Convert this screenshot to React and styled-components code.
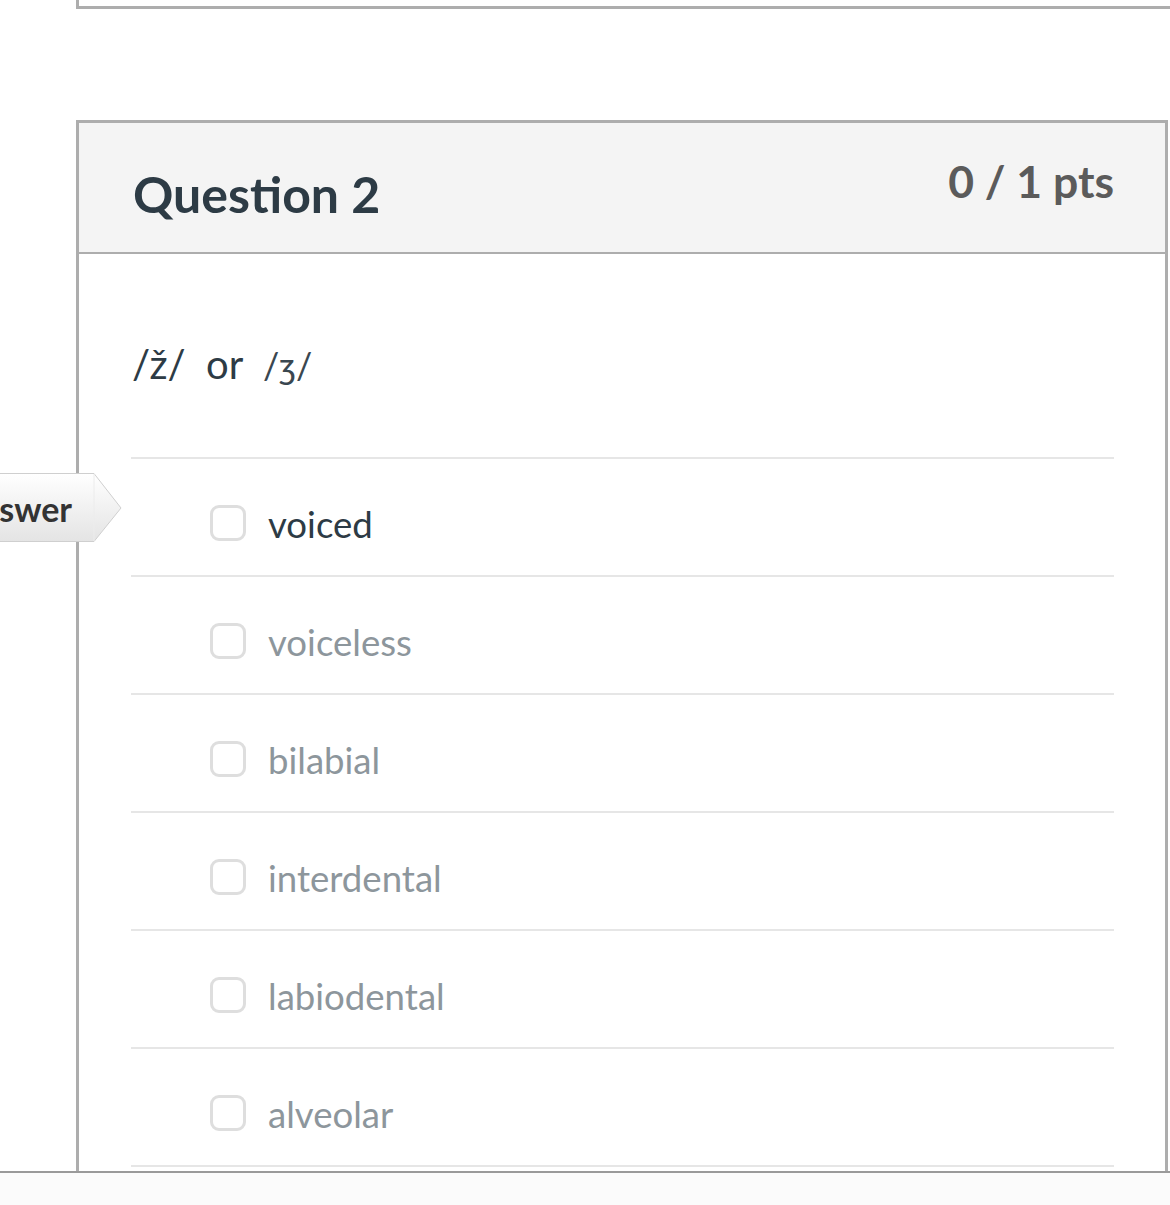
import React from "react";
import styled, { createGlobalStyle } from "styled-components";

const Global = createGlobalStyle`
  html, body { margin: 0; padding: 0; background: #fff; }
  body { overflow: hidden; font-family: Lato, "Open Sans", sans-serif; }
`;

const Page = styled.div`
  padding-left: 76px;
  height: 1205px;
  box-sizing: border-box;
`;

const PrevBox = styled.div`
  height: 6px;
  border-left: 3px solid #adadad;
  border-bottom: 3px solid #adadad;
  margin-right: -10px;
`;

const Card = styled.section`
  margin-top: 111px;
  width: 1092px;
  box-sizing: border-box;
  border: 3px solid #adadad;
  border-bottom: none;
  height: 1100px;
`;

const Header = styled.header`
  height: 129px;
  background: #f4f4f4;
  border-bottom: 2px solid #adadad;
  display: flex;
  justify-content: space-between;
  align-items: flex-start;
  padding: 0 51px 0 54px;
`;

const Title = styled.h2`
  margin: 46px 0 0;
  font-size: 50px;
  line-height: 1;
  font-weight: 700;
  color: #2d3b45;
`;

const Points = styled.div`
  margin-top: 36px;
  font-size: 44.5px;
  line-height: 1;
  font-weight: 700;
  color: #5b5b5b;
`;

const Body = styled.div`
  padding: 87px 51px 0 52px;
`;

const QuestionText = styled.p`
  margin: 0 0 69px 1px;
  font-size: 40px;
  line-height: 46px;
  color: #2d3b45;
  white-space: pre;
`;

const Ipa = styled.span`
  font-size: 36px;
  letter-spacing: 0.5px;
  color: #3a4750;
`;

const AnswerList = styled.ul`
  list-style: none;
  margin: 0;
  padding: 0;
  border-bottom: 2px solid #e6e6e6;
`;

const Row = styled.li`
  position: relative;
  border-top: 2px solid #e6e6e6;
  display: flex;
  align-items: flex-start;
  padding: 46px 0 0 79px;
  box-sizing: content-box;
  height: 70px;
`;

const Box = styled.span`
  width: 36px;
  height: 36px;
  box-sizing: border-box;
  border: 3px solid #dedede;
  border-radius: 9px;
  background: #fff;
  flex: none;
`;

const Label = styled.span`
  margin-left: 22px;
  margin-top: 1px;
  font-size: 36.6px;
  line-height: 36px;
  color: ${(p) => (p.$selected ? "#2d3b45" : "#8d969c")};
`;

const Tag = styled.div`
  position: absolute;
  top: 14px;
  left: -331px;
  width: 322px;
  height: 69px;
  display: flex;
  align-items: center;
  justify-content: flex-end;
  padding-right: 50px;
  box-sizing: border-box;
`;

const TagShape = styled.svg`
  position: absolute;
  inset: 0;
`;

const TagText = styled.span`
  position: relative;
  font-size: 34px;
  font-weight: 700;
  color: #333;
  line-height: 1;
  margin-top: 2px;
`;

const BottomBar = styled.div`
  position: fixed;
  left: 0;
  right: 0;
  top: 1171px;
  bottom: 0;
  background: #fbfbfb;
  border-top: 2px solid #9a9a9a;
`;

const answers = [
  "voiced",
  "voiceless",
  "bilabial",
  "interdental",
  "labiodental",
  "alveolar",
];

export default function App() {
  return (
    <>
      <Global />
      <Page>
        <PrevBox />
        <Card>
          <Header>
            <Title>Question 2</Title>
            <Points>0 / 1 pts</Points>
          </Header>
          <Body>
            <QuestionText>
              {"/ž/  or  "}
              <Ipa>/ʒ/</Ipa>
            </QuestionText>
            <AnswerList>
              {answers.map((a, i) => (
                <Row key={a}>
                  {i === 0 && (
                    <Tag>
                      <TagShape viewBox="0 0 322 69" width="322" height="69">
                        <defs>
                          <linearGradient id="tg" x1="0" y1="0" x2="0" y2="1">
                            <stop offset="0" stopColor="#ffffff" />
                            <stop offset="1" stopColor="#e4e4e4" />
                          </linearGradient>
                        </defs>
                        <path
                          d="M0 0.5 H294 L321 35 L294 68.5 H0 Z"
                          fill="url(#tg)"
                          stroke="#cfcfcf"
                          strokeWidth="1"
                        />
                        <line x1="294" y1="1" x2="294" y2="68" stroke="#ececec" />
                      </TagShape>
                      <TagText>Correct Answer</TagText>
                    </Tag>
                  )}
                  <Box />
                  <Label $selected={i === 0}>{a}</Label>
                </Row>
              ))}
            </AnswerList>
          </Body>
        </Card>
      </Page>
      <BottomBar />
    </>
  );
}
